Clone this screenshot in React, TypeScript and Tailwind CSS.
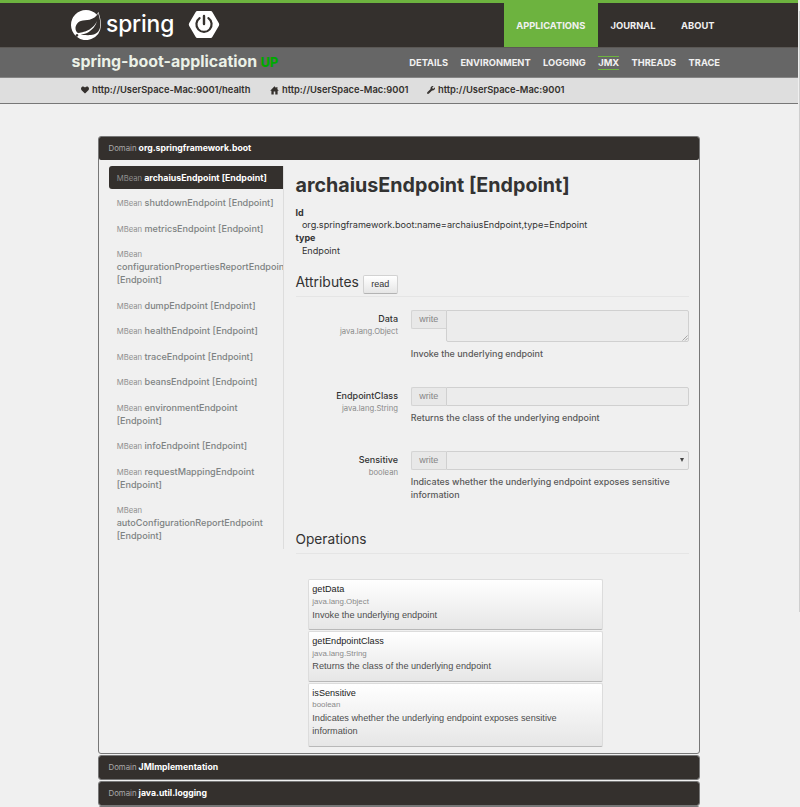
import React from 'react';
import { SiSpring } from 'react-icons/si';
import { FaHeart, FaWrench } from 'react-icons/fa';

interface Operation {
  name: string;
  type: string;
  description: string;
}

interface Attribute extends Operation {
  input: 'textarea' | 'text' | 'select';
}

const navItems = ['JOURNAL', 'ABOUT'];

const tabs = ['DETAILS', 'ENVIRONMENT', 'LOGGING', 'JMX', 'THREADS', 'TRACE'];

const beans = [
  'archaiusEndpoint',
  'shutdownEndpoint',
  'metricsEndpoint',
  'configurationPropertiesReportEndpoint',
  'dumpEndpoint',
  'healthEndpoint',
  'traceEndpoint',
  'beansEndpoint',
  'environmentEndpoint',
  'infoEndpoint',
  'requestMappingEndpoint',
  'autoConfigurationReportEndpoint',
];

const attributes: Attribute[] = [
  { name: 'Data', type: 'java.lang.Object', description: 'Invoke the underlying endpoint', input: 'textarea' },
  { name: 'EndpointClass', type: 'java.lang.String', description: 'Returns the class of the underlying endpoint', input: 'text' },
  { name: 'Sensitive', type: 'boolean', description: 'Indicates whether the underlying endpoint exposes sensitive information', input: 'select' },
];

const operations: Operation[] = [
  { name: 'getData', type: 'java.lang.Object', description: 'Invoke the underlying endpoint' },
  { name: 'getEndpointClass', type: 'java.lang.String', description: 'Returns the class of the underlying endpoint' },
  { name: 'isSensitive', type: 'boolean', description: 'Indicates whether the underlying endpoint exposes sensitive information' },
];

const BootLogo = () => (
  <svg viewBox="0 0 32 28" className="ml-[14px] h-[29px] w-[32px]">
    <path d="M9.2 0.5h13.6q1 0 1.5 0.9l6.6 11.4q0.6 1.2 0 2.4l-6.6 11.4q-0.5 0.9-1.5 0.9H9.2q-1 0-1.5-0.9L1.1 15.2q-0.6-1.2 0-2.4L7.7 1.4q0.5-0.9 1.5-0.9z" fill="#fff" />
    <path d="M11.6 7.6a7.6 7.6 0 1 0 8.8 0" fill="none" stroke="#34302d" strokeWidth="2.2" strokeLinecap="round" />
    <path d="M16 5.4v8.2" stroke="#34302d" strokeWidth="2.4" strokeLinecap="round" />
  </svg>
);

const HomeIcon = () => (
  <svg viewBox="0 0 9 9" className="h-[9px] w-[9px] fill-current">
    <path d="M4.5 0.3L0.2 4.8h1.2V8.5h2.3V5.6h1.6v2.9h2.3V4.8h1.2L7.4 3.3V1H6.3v1.2z" />
  </svg>
);

const Header = () => (
  <header className="w-[798px]">
    <div className="flex h-[47px] border-t-[3px] border-[#6db33f] bg-[#34302d] pl-[71px]">
      <div className="flex w-[432.5px] items-center pb-[1px] text-white">
        <SiSpring className="h-[30px] w-[30px]" />
        <span className="ml-[5px] -mt-[1px] text-[22.8px] font-medium leading-none tracking-[-0.15px]">spring</span>
        <BootLogo />
      </div>
      <nav className="flex text-[9.35px] font-bold leading-[45px] text-[#f1f1f1]">
        <a className="w-[94.5px] bg-[#6db33f] text-center">APPLICATIONS</a>
        {navItems.map((item) => (
          <a key={item} className="pl-[12.5px] pr-[13px]">{item}</a>
        ))}
      </nav>
    </div>
    <div className="flex h-[31px] items-center justify-between border-b border-t border-b-[#858585] border-t-[#5b5855] bg-[#666] pl-[71.5px] pr-[78px]">
      <h1 className="-mt-[2px] text-[15.9px] font-bold leading-none tracking-[-0.02px] text-[#ebf1e7]">
        spring-boot-application <span className="text-[12.7px] font-extrabold text-[#00a800]">UP</span>
      </h1>
      <nav className="flex gap-[12.4px] text-[9.3px] font-bold leading-[12px] text-[#f1f1f1]">
        {tabs.map((tab) => (
          <a key={tab} className={tab === 'JMX' ? 'border-y border-[#6db33f]' : 'border-y border-transparent'}>
            {tab}
          </a>
        ))}
      </nav>
    </div>
    <div className="flex h-[26px] items-center border-b border-[#777] bg-[#dedede] pl-[81px] text-[9.35px] font-semibold text-[#34302d]">
      <a className="flex w-[189px] items-center gap-[3px]"><FaHeart className="h-[8px] w-[8px]" />http://UserSpace-Mac:9001/health</a>
      <a className="flex w-[157px] items-center gap-[3px]"><HomeIcon />http://UserSpace-Mac:9001</a>
      <a className="flex items-center gap-[3px]"><FaWrench className="h-[8px] w-[8px]" />http://UserSpace-Mac:9001</a>
    </div>
  </header>
);

const DomainHeading = ({ name }: { name: string }) => (
  <div className="h-[23px] rounded-[2px] bg-[#34302d] pl-[9.5px] text-[8.7px] font-bold leading-[23px] text-white">
    <span className="text-[7.8px] font-normal leading-none text-[#aaa]">Domain</span> {name}
  </div>
);

const BeanList = () => (
  <ul className="w-[175px] shrink-0 self-start overflow-hidden border-r border-[#ddd]">
    {beans.map((bean, i) => (
      <li
        key={bean}
        className={`mb-[2.56px] pb-[4.24px] pl-[7.7px] pt-[6px] leading-[12.8px] ${
          i === 0 ? 'rounded-l-[3px] bg-[#34302d] text-[8.8px] font-bold text-white' : 'text-[9.1px] font-medium text-[#7d8282]'
        }`}
      >
        <span className="text-[7.7px] font-normal leading-none text-[#8f8f8f]">MBean</span> {bean} [Endpoint]
      </li>
    ))}
  </ul>
);

const AttributeInput = ({ input }: { input: Attribute['input'] }) => (
  <div className="flex items-start font-['Liberation_Sans',sans-serif]">
    <button className="h-[19px] w-[35px] rounded-l-[2px] border border-r-0 border-[#d4d4d4] bg-[#e8e8e8] text-[9px] leading-[17px] text-[#858585]">
      write
    </button>
    {input === 'textarea' && (
      <textarea readOnly className="block h-[32px] w-[243px] resize-none rounded-[2px] rounded-tl-none border border-[#d0d0d0] bg-[#ececec]" />
    )}
    {input === 'text' && <input readOnly className="h-[19px] w-[243px] rounded-r-[2px] border border-[#d0d0d0] bg-[#ececec]" />}
    {input === 'select' && (
      <div className="flex h-[19px] w-[243px] items-center justify-end rounded-r-[2px] border border-[#d0d0d0] bg-[#ececec] pr-[4px]">
        <span className="h-0 w-0 border-x-2 border-t-4 border-x-transparent border-t-[#444]" />
      </div>
    )}
    {input === 'textarea' && (
      <svg viewBox="0 0 6 6" className="-ml-[7px] mt-[25px] h-[6px] w-[6px]">
        <path d="M0.5 5.5l5-5M3.2 5.5l2.3-2.3" stroke="#888" strokeWidth="0.7" />
      </svg>
    )}
  </div>
);

const AttributeRow = ({ attribute }: { attribute: Attribute }) => (
  <div className="flex">
    <div className="w-[102.5px] shrink-0 pt-[3.2px] text-right leading-[12.8px]">
      <div className="text-[9px] font-medium text-[#333]">{attribute.name}</div>
      <div className="pt-[0.6px] text-[7.7px] text-[#8a8a8a]">{attribute.type}</div>
    </div>
    <div className="ml-[12.8px]">
      <AttributeInput input={attribute.input} />
      <p className="mt-[6.4px] w-[278px] text-[8.93px] font-medium leading-[12.8px] text-[#595959]">{attribute.description}</p>
    </div>
  </div>
);

const BeanDetail = () => (
  <div className="ml-[11.5px] w-[393.5px] text-[#333]">
    <h2 className="mt-[6px] text-[19.7px] font-bold leading-[26px]">archaiusEndpoint [Endpoint]</h2>
    <dl className="mt-[9px] text-[9.12px] leading-[12.8px]">
      <dt className="text-[9px] font-bold">Id</dt>
      <dd className="ml-[6.4px]">org.springframework.boot:name=archaiusEndpoint,type=Endpoint</dd>
      <dt className="text-[9px] font-bold">type</dt>
      <dd className="ml-[6.4px]">Endpoint</dd>
    </dl>
    <div className="mt-[13px] flex h-[26px] items-center border-b border-[#e5e5e5] pb-[1px]">
      <h3 className="text-[13.9px]">Attributes</h3>
      <button className="ml-[3.8px] mt-[3px] h-[19px] w-[35px] rounded-[2px] border border-[#d2d2d2] border-b-[#b3b3b3] bg-linear-to-b from-white to-[#e6e6e6] font-['Liberation_Sans',sans-serif] text-[9px] leading-[16px]">
        read
      </button>
    </div>
    <div className="mt-[12.8px] flex h-[215px] flex-col gap-[25.8px]">
      {attributes.map((attribute) => (
        <AttributeRow key={attribute.name} attribute={attribute} />
      ))}
    </div>
    <h3 className="h-[29px] border-b border-[#e5e5e5] text-[13.7px] leading-[29px]">Operations</h3>
    <div className="ml-[12.5px] mt-[25.5px] flex w-[295px] flex-col gap-[0.5px] font-['Liberation_Sans',sans-serif]">
      {operations.map((operation) => (
        <button
          key={operation.name}
          className="rounded-[2px] border border-[#dcdcdc] border-b-[#b8b8b8] bg-linear-to-b from-white to-[#e6e6e6] pb-[8px] pl-[3.3px] pt-[2.9px] text-left leading-[12.8px]"
        >
          <div className="text-[9.15px] text-[#222]">{operation.name}</div>
          <div className="text-[7.9px] text-[#8a8a8a]">{operation.type}</div>
          <div className="w-[260px] text-[9.17px] text-[#4d4d4d]">{operation.description}</div>
        </button>
      ))}
    </div>
  </div>
);

export default function App() {
  return (
    <div className="relative h-[807px] w-[800px] overflow-hidden bg-[#f0f0f0] font-['Inter',sans-serif]">
      <Header />
      <main className="ml-[98px] mt-[31.5px] flex w-[602px] flex-col">
        <section className="mb-[1.3px] h-[618.2px] rounded-[3px] border border-[#777]">
          <DomainHeading name="org.springframework.boot" />
          <div className="flex pl-[10px] pt-[6.2px]">
            <BeanList />
            <BeanDetail />
          </div>
        </section>
        {['JMImplementation', 'java.util.logging'].map((name) => (
          <section key={name} className="mb-[0.6px] rounded-[3px] border border-[#777]">
            <DomainHeading name={name} />
          </section>
        ))}
        <div className="h-[4px] rounded-t-[3px] border border-[#777] bg-[#34302d]" />
      </main>
      {/* Scrollbar */}
      <div className="absolute right-0 top-[11px] h-[601px] w-px bg-[#cfcfcf]" />
    </div>
  );
}
